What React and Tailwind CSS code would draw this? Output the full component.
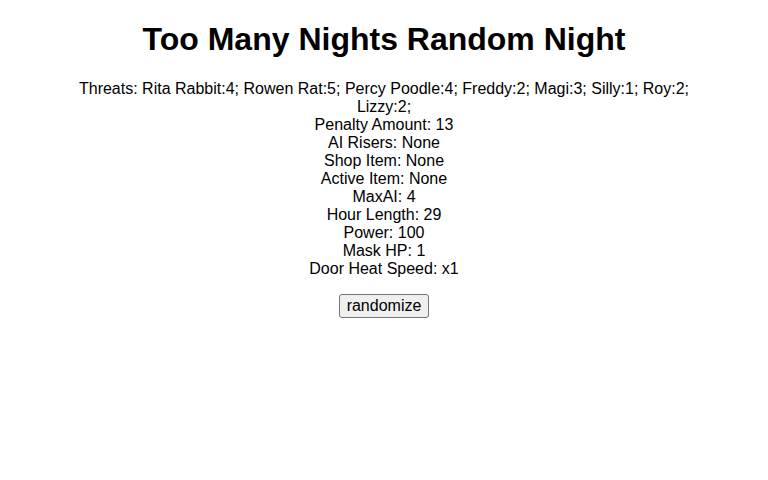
import React, { useState } from "react";

const threats = [
  ["Rita Rabbit", 4],
  ["Rowen Rat", 5],
  ["Percy Poodle", 4],
  ["Freddy", 2],
  ["Magi", 3],
  ["Silly", 1],
  ["Roy", 2],
  ["Lizzy", 2],
];

const App = () => {
  const [night] = useState({
    penalty: 13,
    risers: "None",
    shop: "None",
    active: "None",
    maxAI: 4,
    hour: 29,
    power: 100,
    maskHP: 1,
    heat: "x1",
  });

  const threatText = threats.map(([name, lvl]) => `${name}:${lvl};`).join(" ");

  return (
    <div className="min-h-screen bg-white text-black text-center font-['Liberation_Sans',Arial,sans-serif]">
      <h1 className="pt-[21px] mb-[22px] text-[32px] leading-[37px] font-bold">
        Too Many Nights Random Night
      </h1>
      <div className="max-w-[640px] mx-auto text-base leading-[18px]">
        <div>Threats: {threatText}</div>
        <div>Penalty Amount: {night.penalty}</div>
        <div>AI Risers: {night.risers}</div>
        <div>Shop Item: {night.shop}</div>
        <div>Active Item: {night.active}</div>
        <div>MaxAI: {night.maxAI}</div>
        <div>Hour Length: {night.hour}</div>
        <div>Power: {night.power}</div>
        <div>Mask HP: {night.maskHP}</div>
        <div>Door Heat Speed: {night.heat}</div>
      </div>
      <button className="mt-[16px] h-[24px] px-[7px] text-base leading-[18px] bg-[#efefef] border border-[#767676] rounded-[3px] hover:bg-[#e5e5e5]">
        randomize
      </button>
    </div>
  );
};

export default App;
